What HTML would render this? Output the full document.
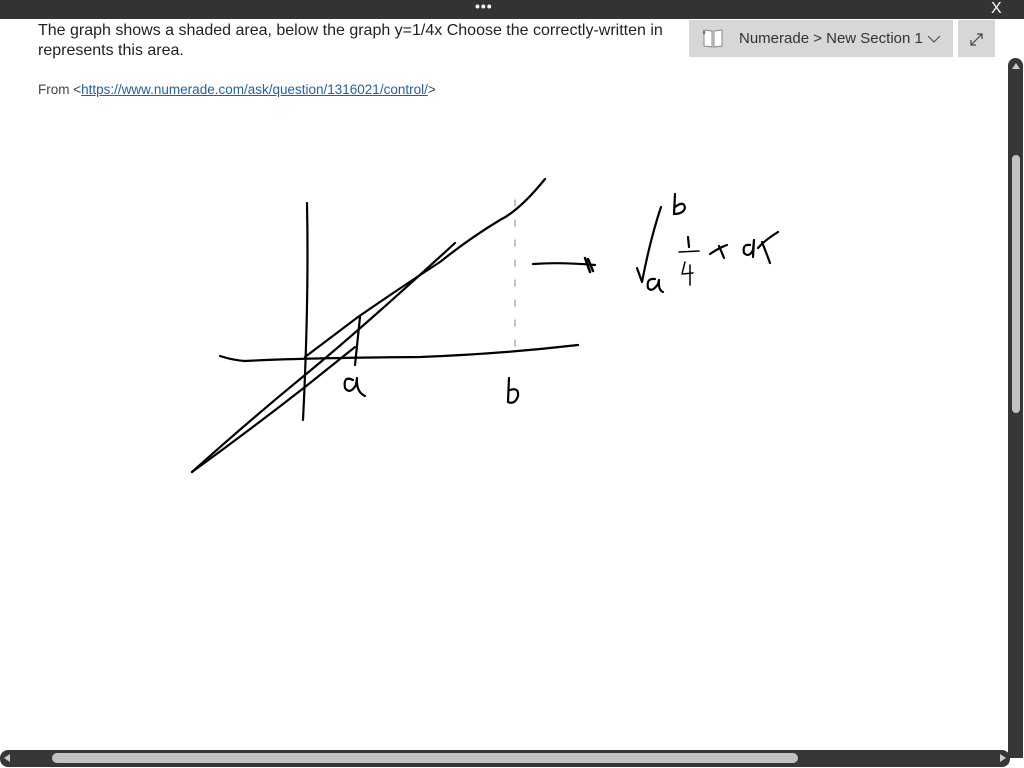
<!DOCTYPE html>
<html><head><meta charset="utf-8"><style>
html,body{margin:0;padding:0;width:1024px;height:768px;overflow:hidden;background:#fff;font-family:"Liberation Sans",sans-serif;position:relative}
.top{position:absolute;left:0;top:0;width:1024px;height:19px;background:#333}
.dots{position:absolute;left:475px;top:-2px;color:#fff;font-size:14px;font-weight:bold;letter-spacing:1px}
.close{position:absolute;left:991px;top:0px;color:#fff;font-size:16px}
.title{position:absolute;left:38px;top:21px;font-size:16px;line-height:20px;color:#222;width:660px;white-space:nowrap;overflow:hidden}
.from{position:absolute;left:38px;top:82px;font-size:13.5px;color:#444}
.from a{color:#1f5fb4;text-decoration:underline}
.nb{position:absolute;left:689px;top:20px;width:264px;height:37px;background:#d7d7d7}
.nb span{position:absolute;left:50px;top:10px;font-size:15px;color:#333}
.ex{position:absolute;left:958px;top:20px;width:37px;height:37px;background:#d7d7d7}
.vs{position:absolute;left:1008px;top:58px;width:15px;height:700px;background:#373737;border-radius:8px 8px 0 0}
.vt{position:absolute;left:1012px;top:155px;width:8px;height:258px;background:#c2c2c2;border-radius:4px}
.hs{position:absolute;left:0;top:750px;width:1010px;height:17px;background:#373737;border-radius:8px}
.ht{position:absolute;left:52px;top:753px;width:746px;height:10px;background:#c2c2c2;border-radius:5px}
</style></head><body>
<div class="top"><div class="dots">•••</div><div class="close">X</div></div>
<div class="title">The graph shows a shaded area, below the graph y=1/4x Choose the correctly-written in<br>represents this area.</div>
<div class="from">From &lt;<a>https://www.numerade.com/ask/question/1316021/control/</a>&gt;</div>
<div class="nb">
<svg width="30" height="37" style="position:absolute;left:12px;top:0"><path d="M3 10 L11 11 L11 27 L3 26 Z M13 11 L21 10 L21 26 L13 27 Z" fill="#fff" stroke="#888" stroke-width="1"/><rect x="2" y="11" width="2" height="3" fill="#c44"/></svg>
<span>Numerade &gt; New Section 1</span>
<svg width="16" height="12" style="position:absolute;left:238px;top:13px"><path d="M1 3 L7 9 L13 3" fill="none" stroke="#555" stroke-width="1.2"/></svg>
</div>
<div class="ex"><svg width="37" height="37"><path d="M13 25 L24 14 M19 14 L24 14 L24 19 M13 20 L13 25 L18 25" fill="none" stroke="#444" stroke-width="1.2"/></svg></div>
<svg width="1024" height="768" style="position:absolute;left:0;top:0" fill="none" stroke="#000" stroke-width="2.2" stroke-linecap="round" stroke-linejoin="round">
<path d="M307 203 Q309 300 303 420"/>
<path d="M220 356 Q232 360 245 361 Q300 358 420 357 Q500 354 578 345"/>
<path d="M305 357 Q330 338 358 317 Q400 288 440 262 Q470 238 500 220 Q520 210 545 179"/>
<path d="M192 472 Q250 420 305 375 Q360 330 455 243"/>
<path d="M192 472 Q250 430 305 387 Q330 367 355 347"/>
<path d="M360 317 L355 365"/>
<path d="M353 380 Q343 375 345 388 Q350 395 356 385 L357 378 Q356 392 365 396"/>
<path d="M515 200 L515 350" stroke="#999" stroke-width="1.2" stroke-dasharray="6 14"/>
<path d="M509 378 L508 402 Q515 405 518 396 Q519 387 510 390"/>
<path d="M533 264 Q560 262 595 265"/>
<path d="M585 258 L590 272 M588 259 L593 271" stroke-width="2.5"/>
<path d="M637 268 L642 282 Q650 240 661 207"/>
<path d="M675 194 L674 214 Q683 214 685 208 Q684 200 675 207"/>
<path d="M655 279 Q646 278 648 288 Q652 293 658 284 L659 280 Q658 290 663 292"/>
<path d="M688 237 L689 247"/>
<path d="M679 252 L699 251" stroke-width="1.5"/>
<path d="M685 262 L682 274 L693 273 M690 265 L690 285" stroke-width="1.5"/>
<path d="M710 254 Q716 250 720 248 Q724 246 727 245 M719 246 Q722 253 724 258"/>
<path d="M750 245 Q742 244 744 253 Q749 258 753 250 L754 240 L753 257"/>
<path d="M758 248 Q765 240 778 232 M762 242 Q766 252 770 263"/>
</svg>
<div class="vs"></div>
<svg width="10" height="8" style="position:absolute;left:1011px;top:62px"><path d="M1 7 L5 1 L9 7 Z" fill="#ccc"/></svg>
<div class="vt"></div>
<div class="hs"></div>
<svg width="8" height="10" style="position:absolute;left:3px;top:753px"><path d="M7 1 L1 5 L7 9 Z" fill="#ccc"/></svg>
<svg width="8" height="10" style="position:absolute;left:999px;top:753px"><path d="M1 1 L7 5 L1 9 Z" fill="#ccc"/></svg>
<div class="ht"></div>
</body></html>
